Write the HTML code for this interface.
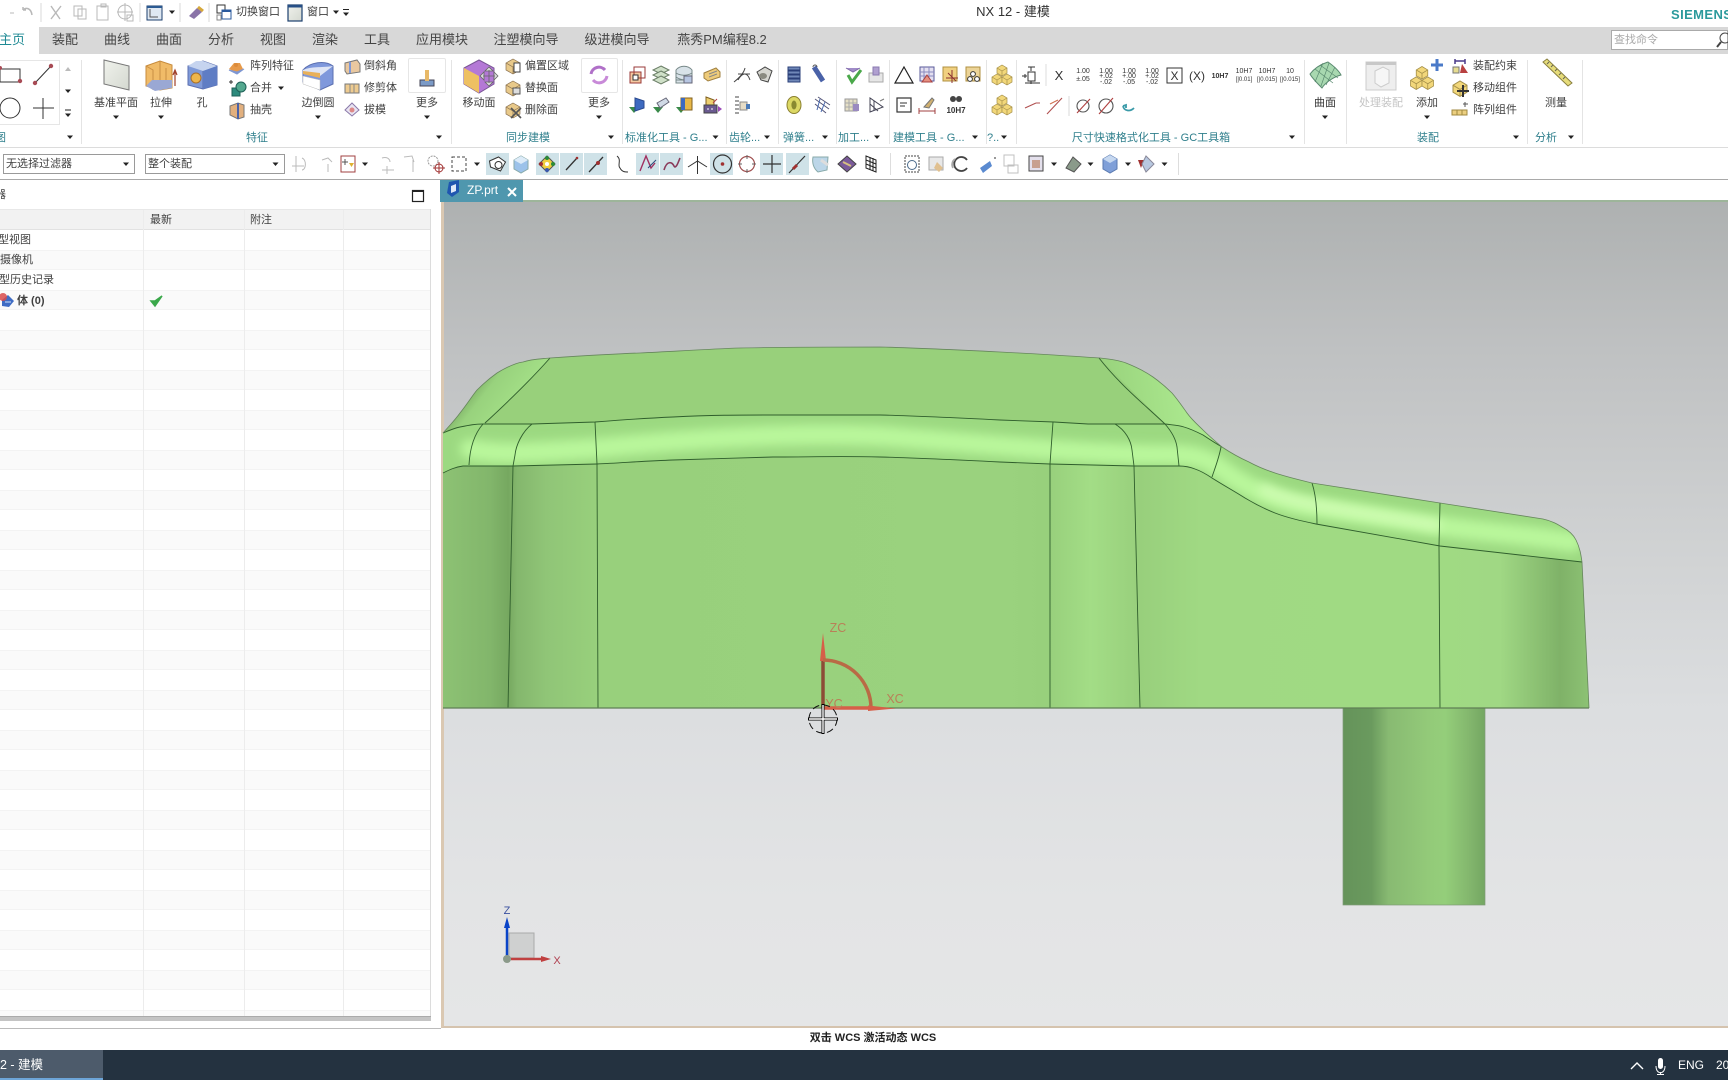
<!DOCTYPE html>
<html lang="zh"><head><meta charset="utf-8"><title>NX 12 - 建模</title>
<style>
html,body{margin:0;padding:0;width:1728px;height:1080px;overflow:hidden;background:#fff}
body{position:relative;font-family:"Liberation Sans","Noto Sans CJK SC",sans-serif;color:#333}
#w{position:absolute;left:0;top:0;width:1728px;height:1080px;overflow:hidden;filter:blur(.35px)}
.b{position:absolute}
.t{position:absolute;white-space:nowrap;font-size:11px;line-height:14px;color:#3f3f3f}
.c{transform:translateX(-50%)}
.m{font-size:13px;line-height:16px;top:32px;color:#444}
.g{top:131px;color:#2f7f8c}
.l{top:96px}
.r1{top:59px}.r2{top:81px}.r3{top:103px}
.s{position:absolute;width:1px;top:60px;height:84px;background:#e4e4e4}
.h{position:absolute;top:153px;height:22px;width:23px;background:#cfe2e8}
.cl{position:absolute;top:210px;height:806px;width:1px;background:#ececec}
.row{position:absolute;left:0;width:430px;height:20px;background:#fafafa;border-top:1px solid #f3f3f3;border-bottom:1px solid #f3f3f3;box-sizing:border-box}
svg{position:absolute;left:0;top:0}
</style></head><body><div id="w">

<!-- chrome backgrounds -->
<div class="b" style="left:0;top:27px;width:1728px;height:27px;background:#d8d8d8"></div>
<div class="b" style="left:0;top:27px;width:39px;height:27px;background:#fff"></div>
<div class="b" style="left:0;top:147px;width:1728px;height:1px;background:#dcdcdc"></div>
<div class="b" style="left:0;top:179px;width:1728px;height:1px;background:#a9a9a9"></div>
<div class="s" style="left:81px"></div><div class="s" style="left:451px"></div><div class="s" style="left:622px"></div>
<div class="s" style="left:726px"></div><div class="s" style="left:778px"></div><div class="s" style="left:836px"></div>
<div class="s" style="left:889px"></div><div class="s" style="left:986px"></div><div class="s" style="left:1016px"></div>
<div class="s" style="left:1304px"></div><div class="s" style="left:1346px"></div><div class="s" style="left:1527px"></div><div class="s" style="left:1582px"></div>
<div class="b" style="left:0;top:60px;width:60px;height:65px;border-right:1px solid #e6e6e6;border-top:1px solid #e6e6e6;border-bottom:1px solid #e6e6e6;box-sizing:border-box"></div>
<div class="b" style="left:408px;top:58px;width:38px;height:35px;border:1px solid #e6e6e6;border-radius:2px;box-sizing:border-box"></div>
<div class="b" style="left:581px;top:58px;width:37px;height:35px;border:1px solid #e6e6e6;border-radius:2px;box-sizing:border-box"></div>
<div class="b" style="left:1611px;top:30px;width:117px;height:20px;border:1px solid #aaa;background:#fff;box-sizing:border-box"></div>
<div class="b" style="left:3px;top:154px;width:132px;height:20px;border:1px solid #9a9a9a;box-sizing:border-box"></div>
<div class="b" style="left:145px;top:154px;width:140px;height:20px;border:1px solid #9a9a9a;box-sizing:border-box"></div>
<div class="h" style="left:486px"></div><div class="h" style="left:536px"></div><div class="h" style="left:560px"></div><div class="h" style="left:584px"></div>
<div class="h" style="left:636px"></div><div class="h" style="left:660px"></div><div class="h" style="left:710px"></div><div class="h" style="left:760px"></div><div class="h" style="left:786px"></div>
<div class="b" style="left:890px;top:153px;width:1px;height:22px;background:#ddd"></div>
<div class="b" style="left:1178px;top:153px;width:1px;height:22px;background:#ddd"></div>

<!-- left table -->
<div class="b" style="left:0;top:209px;width:431px;height:21px;background:#f2f2f2;border-top:1px solid #e8e8e8;border-bottom:1px solid #e2e2e2;box-sizing:border-box"></div>
<div class="row" style="top:250px"></div><div class="row" style="top:290px"></div><div class="row" style="top:330px"></div><div class="row" style="top:370px"></div><div class="row" style="top:410px"></div><div class="row" style="top:450px"></div><div class="row" style="top:490px"></div><div class="row" style="top:530px"></div><div class="row" style="top:570px"></div><div class="row" style="top:610px"></div><div class="row" style="top:650px"></div><div class="row" style="top:690px"></div><div class="row" style="top:730px"></div><div class="row" style="top:770px"></div><div class="row" style="top:810px"></div><div class="row" style="top:850px"></div><div class="row" style="top:890px"></div><div class="row" style="top:930px"></div><div class="row" style="top:970px"></div>
<div class="row" style="top:1010px;height:6px;border-bottom:0"></div>
<div class="cl" style="left:143px"></div><div class="cl" style="left:244px"></div><div class="cl" style="left:343px"></div>
<div class="b" style="left:430px;top:209px;width:1px;height:812px;background:#dcdcdc"></div>
<div class="b" style="left:0;top:1016px;width:431px;height:5px;background:#c4c4c4;border-top:1px solid #aaa;box-sizing:border-box"></div>
<div class="b" style="left:0;top:1028px;width:441px;height:1px;background:#bbb"></div>

<!-- viewport -->
<div class="b" style="left:440px;top:180px;width:83px;height:22px;background:#4f97ae"></div>
<div class="b" style="left:523px;top:200px;width:1205px;height:2px;background:#9db59a"></div>
<div class="b" style="left:441px;top:202px;width:1287px;height:826px;box-sizing:border-box;border-left:3px solid #dac8b2;border-bottom:2px solid #d5c3ae;background:linear-gradient(180deg,#aeb1b1 0,#bfc1c2 18%,#d0d2d3 42%,#dcdee0 62%,#e3e4e5 85%,#e5e6e7 100%)"></div>

<!-- taskbar -->
<div class="b" style="left:0;top:1050px;width:1728px;height:30px;background:#243240"></div>
<div class="b" style="left:0;top:1050px;width:103px;height:30px;background:#4d5b6b;border-bottom:2px solid #6da5d8;box-sizing:border-box"></div>

<svg width="1728" height="1080" viewBox="0 0 1728 1080" xmlns="http://www.w3.org/2000/svg">
<defs>
<linearGradient id="side" gradientUnits="userSpaceOnUse" x1="443" y1="0" x2="1589" y2="0">
<stop offset="0" stop-color="#8dc274"/><stop offset=".041" stop-color="#82b66b"/><stop offset=".057" stop-color="#76a860"/><stop offset=".065" stop-color="#84b76d"/><stop offset=".09" stop-color="#90c577"/><stop offset=".135" stop-color="#98d07c"/><stop offset=".486" stop-color="#9ad27e"/><stop offset=".53" stop-color="#98d07c"/><stop offset=".565" stop-color="#a3dd86"/><stop offset=".608" stop-color="#98cf7c"/><stop offset=".661" stop-color="#a0d983"/><stop offset=".87" stop-color="#a0da83"/><stop offset=".922" stop-color="#a0d884"/><stop offset=".975" stop-color="#7fb268"/><stop offset="1" stop-color="#8dc274"/>
</linearGradient>
<linearGradient id="cyl" gradientUnits="userSpaceOnUse" x1="1343" y1="0" x2="1485" y2="0">
<stop offset="0" stop-color="#65935a"/><stop offset=".2" stop-color="#6a9a5e"/><stop offset=".32" stop-color="#88ba72"/><stop offset=".6" stop-color="#93ca79"/><stop offset=".72" stop-color="#94ce7a"/><stop offset=".88" stop-color="#84b86e"/><stop offset="1" stop-color="#74a662"/>
</linearGradient>
<linearGradient id="cnl" gradientUnits="userSpaceOnUse" x1="462" y1="392" x2="505" y2="425">
<stop offset="0" stop-color="#74a35f"/><stop offset=".35" stop-color="#98d27d"/><stop offset="1" stop-color="#a5e188"/>
</linearGradient>
<linearGradient id="cnr" gradientUnits="userSpaceOnUse" x1="1100" y1="380" x2="1180" y2="370">
<stop offset="0" stop-color="#98d27c"/><stop offset="1" stop-color="#aae78d"/>
</linearGradient>
<linearGradient id="pl" x1="0" y1="0" x2="1" y2="1"><stop offset="0" stop-color="#f0f2ec"/><stop offset="1" stop-color="#d4d8d0"/></linearGradient>
<filter id="bl" x="-5%" y="-30%" width="110%" height="160%"><feGaussianBlur stdDeviation="5"/></filter>
<clipPath id="bandc"><path d="M443,433C450,430 455,428 460,427C470,425 475,424 483,424L532,424L595,422C620,420 650,418 673,417C710,415 740,415 773,415C810,415 850,415 880,415C920,416 960,418 1000,420L1054,422L1088,424L1165,424C1173,425 1178,425 1184,427C1191,429 1197,432 1203,435C1209,439 1215,443 1222,447C1231,453 1240,458 1249,462C1258,467 1266,470 1275,473C1287,477 1300,480 1312,483L1440,503L1543,519C1552,521 1557,524 1562,527C1570,531 1574,536 1576,540C1580,548 1581,555 1582,562L1440,546L1316,524C1302,521 1288,518 1275,513C1265,509 1255,504 1245,498C1234,491 1223,485 1212,478C1206,474 1201,471 1195,469C1190,467 1185,466 1179,466L1134,466L1050,464L1000,462C960,460 920,458 880,457C840,456 810,457 773,457C740,458 705,459 673,460C645,461 620,463 597,464L513,466L463,466C455,467 449,470 443,473Z"/></clipPath>
<path id="d" d="M-3,-1.5h6l-3,3.5z" fill="#222"/>
<g id="cb"><path d="M-5,-2 0,-5 5,-2 5,3 0,6 -5,3z" fill="#f2d77a" stroke="#a5904a" stroke-width=".7"/><path d="M-5,-2 0,1 5,-2M0,1V6" fill="none" stroke="#a5904a" stroke-width=".7"/></g>
<g id="cubes"><use href="#cb" x="0" y="-5"/><use href="#cb" x="-5" y="4"/><use href="#cb" x="5" y="4"/></g>
<g id="fc"><path d="M-7,-3 0,-7 7,-3V4L0,8-7,4z" fill="#e8c98a" stroke="#8a7150" stroke-width=".7"/><path d="M-7,-3 0,1 7,-3M0,1V8" fill="none" stroke="#8a7150" stroke-width=".7"/></g>
</defs>

<!-- ===== MODEL ===== -->
<rect x="1343" y="708" width="142" height="197" fill="url(#cyl)" stroke="#7f9a78" stroke-width=".7"/>
<path id="sil" d="M443,708L443,433C450,425 455,420 460,413C468,403 472,396 477,390C485,382 490,378 497,373C507,367 515,363 523,362C532,359 540,359 550,358C580,356 610,354 640,353C680,351 710,349 740,348C790,347 830,347 880,347C920,348 960,350 1000,352C1040,354 1070,356 1100,358C1110,359 1118,360 1126,363C1136,367 1146,372 1153,377C1160,382 1167,388 1172,393C1178,400 1182,406 1187,413C1192,420 1198,425 1203,430C1209,436 1215,441 1222,447C1231,453 1240,458 1249,462C1258,467 1266,470 1275,473C1287,477 1300,480 1312,483L1440,503L1543,519C1552,521 1557,524 1562,527C1570,531 1574,536 1576,540C1580,548 1581,555 1582,562L1589,708Z" fill="url(#side)"/>
<!-- top face -->
<path d="M483,424C510,400 535,375 550,358C580,356 610,354 640,353C680,351 710,349 740,348C790,347 830,347 880,347C920,348 960,350 1000,352C1040,354 1070,356 1100,358L1165,424L1088,424L1054,422L1000,420C960,418 920,416 880,415C850,415 810,415 773,415C740,415 710,415 673,417C650,418 620,420 595,422L532,424Z" fill="#98d07b"/>
<!-- corners -->
<path d="M443,433C450,425 455,420 460,413C468,403 472,396 477,390C485,382 490,378 497,373C507,367 515,363 523,362C532,359 540,359 550,358C535,375 510,400 483,424C470,424 455,428 443,433Z" fill="url(#cnl)"/>
<path d="M1100,358C1110,359 1118,360 1126,363C1136,367 1146,372 1153,377C1160,382 1167,388 1172,393C1178,400 1182,406 1187,413C1192,420 1198,425 1203,430C1209,436 1215,441 1222,447C1212,440 1195,429 1184,427C1178,425 1173,425 1165,424Z" fill="url(#cnr)"/>
<!-- fillet band -->
<g clip-path="url(#bandc)">
<rect x="440" y="410" width="1150" height="160" fill="#9cd981"/>
<path filter="url(#bl)" fill="none" stroke="#b9f79b" stroke-width="20" stroke-linecap="round" d="M470,449C500,456 540,452 600,448C700,438 800,432 880,436C960,442 1060,452 1134,454C1175,456 1195,450 1220,468C1250,492 1290,505 1320,508L1440,526C1490,533 1530,535 1572,542"/>
<path filter="url(#bl)" fill="none" stroke="#d0fdb4" stroke-width="10" d="M1260,488C1290,503 1320,506 1440,526"/>
</g>
<!-- face edges -->
<g fill="none" stroke="#2f5e2c" stroke-width=".9">
<path d="M443,433C450,430 455,428 460,427C470,425 475,424 483,424L532,424L595,422C620,420 650,418 673,417C710,415 740,415 773,415C810,415 850,415 880,415C920,416 960,418 1000,420L1054,422L1088,424L1165,424C1173,425 1178,425 1184,427C1191,429 1197,432 1203,435C1209,439 1215,443 1222,447" />
<path d="M443,473C449,470 455,467 463,466L513,466L597,464C620,463 645,461 673,460C705,459 740,458 773,457C810,457 840,456 880,457C920,458 960,460 1000,462L1050,464L1134,466L1179,466C1185,466 1190,467 1195,469C1201,471 1206,474 1212,478C1223,485 1234,491 1245,498C1255,504 1265,509 1275,513C1288,518 1302,521 1316,524L1440,546L1582,562" />
<path d="M550,358C535,375 510,400 485,423"/>
<path d="M483,424C476,432 470,445 469,465"/>
<path d="M532,424C522,432 516,445 515,455L513,466L508,708"/>
<path d="M595,422L597,464L598,708"/>
<path d="M1053,422L1050,464V708"/>
<path d="M1115,424C1125,430 1131,440 1132,450L1134,466L1140,708"/>
<path d="M1165,424C1172,432 1176,440 1177,447L1179,466"/>
<path d="M1099,358C1120,385 1145,405 1165,424"/>
<path d="M1221,447C1219,458 1215,468 1212,477"/>
<path d="M1312,483C1316,495 1317,510 1317,524"/>
<path d="M1440,503L1439,546L1440,708"/>
</g>
<path d="M443,433C450,425 455,420 460,413C468,403 472,396 477,390C485,382 490,378 497,373C507,367 515,363 523,362C532,359 540,359 550,358C580,356 610,354 640,353C680,351 710,349 740,348C790,347 830,347 880,347C920,348 960,350 1000,352C1040,354 1070,356 1100,358C1110,359 1118,360 1126,363C1136,367 1146,372 1153,377C1160,382 1167,388 1172,393C1178,400 1182,406 1187,413C1192,420 1198,425 1203,430C1209,436 1215,441 1222,447C1231,453 1240,458 1249,462C1258,467 1266,470 1275,473C1287,477 1300,480 1312,483L1440,503L1543,519C1552,521 1557,524 1562,527C1570,531 1574,536 1576,540C1580,548 1581,555 1582,562L1589,708" fill="none" stroke="#66865c" stroke-width=".8"/>
<path d="M443,708H1589" stroke="#5f7f55" stroke-width="1.2"/>

<!-- WCS -->
<path d="M823,660V708" stroke="#8c4c36" stroke-width="3.5"/>
<path d="M823,633L820,661H826Z" fill="#d65f48"/>
<path d="M823,660A48,48 0 0 1 871,708" fill="none" stroke="#b96a45" stroke-width="3.5"/>
<path d="M823,708H870" stroke="#d65f48" stroke-width="3.5"/>
<path d="M868,705.5L896,708.5 868,711Z" fill="#d65f48"/>
<text x="838" y="632" text-anchor="middle" font-size="12.5" fill="#b98058" font-family="Liberation Sans">ZC</text>
<text x="895" y="703" text-anchor="middle" font-size="12.5" fill="#b98058" font-family="Liberation Sans">XC</text>
<text x="834" y="708" text-anchor="middle" font-size="12.5" fill="#b98058" font-family="Liberation Sans">YC</text>
<circle cx="823" cy="719" r="14" fill="none" stroke="#111" stroke-width="1" stroke-dasharray="7 4"/>
<path d="M823,704V734M808,719H838" stroke="#000" stroke-width="3"/><path d="M823,705V733M809,719H837" stroke="#fff" stroke-width="1.4"/>

<!-- triad -->
<rect x="509" y="933" width="25" height="25" fill="#cfd0d0" stroke="#aaa"/>
<path d="M507,959V925" stroke="#0a44c8" stroke-width="2.5"/><path d="M504,928 507,917 510,928Z" fill="#0a44c8"/>
<path d="M511,959H545" stroke="#c04040" stroke-width="2.5"/><path d="M541,956 551,959 541,962Z" fill="#c04040"/>
<circle cx="507" cy="959" r="4" fill="#8b9a8a"/>
<text x="507" y="914" text-anchor="middle" font-size="11" fill="#3a50a0" font-family="Liberation Sans">Z</text>
<text x="557" y="964" text-anchor="middle" font-size="11" fill="#b04050" font-family="Liberation Sans">X</text>

<!-- ===== QUICK ACCESS ===== -->
<g fill="none" stroke="#b8b8b8" stroke-width="1">
<path d="M10,13h4"/><path d="M23,10C26,7 31,8 32,15M23,10v-3M23,10h3" stroke-width="1.5"/>
<path d="M41,3V22M140,3V22M180,3V22M209,3V22" stroke="#d8d8d8"/>
<path d="M51,19 61,6M60,19 51,6" stroke-width="1.4"/>
<rect x="74" y="6" width="8" height="10"/><rect x="78" y="9" width="8" height="10"/>
<rect x="97" y="6" width="11" height="14"/><rect x="101" y="4" width="5" height="3"/>
<circle cx="125" cy="12" r="7"/><path d="M125,3V21M117,12H133"/><rect x="127" y="15" width="6" height="6"/>
</g>
<rect x="147" y="6" width="15" height="14" fill="#dfe8f2" stroke="#1c3f6e"/><path d="M150,9V17H158" stroke="#555" fill="none"/><rect x="147" y="6" width="15" height="2" fill="#2b5a92"/>
<use href="#d" x="172" y="12"/>
<path d="M189,16 197,8 202,12 194,19Z" fill="#8a74a8"/><path d="M198,7 203,11" stroke="#d6a83a" stroke-width="3"/>
<rect x="217" y="5" width="8" height="8" fill="none" stroke="#333"/><rect x="222" y="10" width="9" height="9" fill="#fff" stroke="#2a5a9e"/><rect x="222" y="10" width="9" height="2" fill="#2a5a9e"/><rect x="217" y="15" width="4" height="5" fill="none" stroke="#888"/>
<rect x="288" y="5" width="14" height="16" fill="url(#pl)" stroke="#1c3f6e" stroke-width="1.2"/><rect x="288" y="5" width="14" height="2.5" fill="#274f86"/>
<use href="#d" x="336" y="12"/><use href="#d" x="346" y="14"/><path d="M343,9.5h6" stroke="#222"/>

<!-- ===== RIBBON left ===== -->
<rect x="0" y="69" width="20" height="13" fill="none" stroke="#333" stroke-width="1"/><circle cx="0" cy="68" r="2" fill="#a84b55"/><circle cx="20" cy="81" r="2.2" fill="#a84b55"/>
<path d="M35,83 51,66" stroke="#333"/><circle cx="35" cy="83" r="2.2" fill="#a84b55"/><circle cx="51" cy="66" r="2.2" fill="#a84b55"/>
<circle cx="10" cy="108" r="10" fill="none" stroke="#333"/><path d="M43,98V119M33,108H54" stroke="#333"/>
<path d="M65,71h6l-3,-4z" fill="#bbb"/><use href="#d" x="68" y="91"/><use href="#d" x="68" y="115"/><path d="M65,110h6" stroke="#222"/>
<use href="#d" x="70" y="137"/>

<path d="M104,60 129,66V90L104,84Z" fill="url(#pl)" stroke="#777"/><use href="#d" x="116" y="117"/>
<path d="M146,66 160,61 172,65V88L160,90 146,86Z" fill="#f0bb68" stroke="#c78b3c"/><path d="M146,66 153,70V90M160,61V86M166,68V86" fill="none" stroke="#c98f45"/><path d="M146,86 152,80H172V88L155,91Z" fill="#9aa8d4"/><path d="M175,86V72M173,75 175,70 177,75" fill="none" stroke="#a0402a" stroke-width="1.2"/><use href="#d" x="161" y="117"/>
<path d="M188,66 203,61 217,66V85L203,89 188,85Z" fill="#7f9ad8" stroke="#5b6fb0"/><path d="M188,66 196,61 203,61 217,66 203,71Z" fill="#c6d4ef"/><path d="M203,71V89" stroke="#5b6fb0"/><path d="M203,71 217,66V85L203,89Z" fill="#5f7dc4"/><circle cx="196" cy="78" r="5" fill="#eeb64c" stroke="#a8702a"/>
<path d="M229,69 234,63 240,63 243,69 237,73Z" fill="#e79a4a"/><path d="M229,70 237,74 244,69 237,72Z" fill="#7f97d2" stroke="#7f97d2"/><circle cx="236" cy="65" r="2" fill="#dc8b3a"/>
<rect x="232" y="88" width="8" height="8" fill="#2c8a7c" stroke="#1e6057"/><circle cx="241" cy="87" r="5" fill="#54a88f" stroke="#1e6057"/><path d="M229,82h4M231,80v4" stroke="#333"/>
<path d="M230,106 238,103 244,105V117L238,119 230,115Z" fill="#e2b07e" stroke="#777"/><path d="M238,103V119" stroke="#4a62a8" stroke-width="2"/>
<use href="#d" x="281" y="88"/>
<path d="M303,70C310,62 325,60 333,66V84L320,90 303,82Z" fill="#7f98dc" stroke="#5b6fb0"/><path d="M303,70C312,66 320,68 333,66L320,76 303,74Z" fill="#dfe5f5"/><path d="M303,76 320,80V90L303,84Z" fill="#fff" stroke="#bbb" stroke-width=".5"/><path d="M303,74 320,78 320,73 303,71Z" fill="#e8b05a"/><use href="#d" x="318" y="117"/>
<g transform="translate(352,66)"><path d="M-7,-3 5,-6 8,-2V6L-5,8-7,5Z" fill="#e9c8a0" stroke="#777"/><path d="M-2,-4V7" stroke="#7f98d6" stroke-width="2"/></g>
<g transform="translate(352,88)"><rect x="-7" y="-4" width="14" height="9" fill="#eecb90" stroke="#777"/><path d="M-2,-4V5M2,-4V5" stroke="#888"/></g>
<g transform="translate(352,110)"><path d="M0,-7 7,0 0,6-7,0Z" fill="#e8e4f2" stroke="#8a78a8"/><circle r="2.5" fill="#d88" /></g>
<g transform="translate(427,78)"><rect x="-7" y="2" width="14" height="6" fill="#7b9ac6" stroke="#445"/><rect x="-2" y="-8" width="4" height="11" fill="#e8b968"/></g><use href="#d" x="427" y="117"/>
<use href="#d" x="439" y="137"/>

<g transform="translate(479,76)"><path d="M-15,-8 0,-16 15,-8V8L0,17-15,8Z" fill="#b478d6" stroke="#7a5596"/><path d="M-15,-8 0,0V17L-15,8Z" fill="#eec062"/><path d="M4,0H16M10,-6V7M10,-9 6,-5H14ZM10,10 6,6H14ZM1,0 5,-4V4ZM19,0 15,-4V4Z" fill="#d9d9dc" stroke="#666" stroke-width=".8"/></g>
<g transform="translate(513,66)"><use href="#fc"/><rect x="1" y="-3" width="6" height="9" fill="#fff" stroke="#444"/></g>
<g transform="translate(513,88)"><use href="#fc"/><rect x="0" y="0" width="7" height="6" fill="#ddd" stroke="#555"/></g>
<g transform="translate(513,110)"><use href="#fc"/><path d="M-2,-2 8,8M8,-2 -2,8" stroke="#555" stroke-width="1.6"/></g>
<g transform="translate(599,75)" fill="none" stroke-width="3"><path d="M-8,-1A8,8 0 0 1 6,-5" stroke="#b070c8"/><path d="M8,1A8,8 0 0 1 -6,5" stroke="#c88ad8"/></g><use href="#d" x="599" y="117"/>
<use href="#d" x="611" y="137"/>

<!-- GC tool rows -->
<g transform="translate(637,75)"><rect x="-7" y="-3" width="11" height="11" fill="#f4c9a2" stroke="#9a3a38"/><rect x="-3" y="-8" width="11" height="11" fill="none" stroke="#9a3a38"/><rect x="-4" y="0" width="5" height="5" fill="#fff" stroke="#333"/></g>
<g transform="translate(661,75)" fill="#cfe0c8" stroke="#6a7d66"><path d="M0,-9 8,-5 0,-1-8,-5Z"/><path d="M0,-4 8,0 0,4-8,0Z"/><path d="M0,1 8,5 0,9-8,5Z"/></g>
<g transform="translate(684,75)"><path d="M-8,-5C-4,-10 4,-10 8,-5V8H-8Z" fill="#d8e2e8" stroke="#788"/><path d="M-8,-2C-3,1 3,1 8,-2M-8,2C-4,5 0,5 2,5M-8,5H2" fill="none" stroke="#788"/><rect x="0" y="1" width="8" height="7" fill="#b7c6e2" stroke="#667"/></g>
<g transform="translate(712,75)"><path d="M-8,-2 4,-7 8,-3 8,2-4,6-8,3Z" fill="#eecb7a" stroke="#a08040"/><path d="M-3,-1 5,-4M-3,2 5,-1" stroke="#888"/></g>
<g transform="translate(637,105)"><path d="M-8,2-3,8 2,2" fill="#3a8a4a"/><path d="M-2,-7 7,-4V3L-2,6Z" fill="#3d6ac0" stroke="#2a4a90"/></g>
<g transform="translate(661,105)"><path d="M-8,2-3,8 2,2" fill="#3a8a4a"/><path d="M-4,-2 5,-7 8,-3-1,3Z" fill="#d0dae6" stroke="#667"/></g>
<g transform="translate(684,105)"><path d="M-8,2-3,8 2,2" fill="#3a8a4a"/><rect x="-3" y="-7" width="11" height="12" fill="#e8b848" stroke="#806020"/><rect x="-3" y="-7" width="4" height="12" fill="#3d6ac0"/></g>
<g transform="translate(712,105)"><path d="M-6,-8 2,-5V3H-6Z" fill="#eed070" stroke="#806020"/><rect x="-8" y="0" width="13" height="8" fill="#6a5a90" stroke="#444"/><path d="M-5,4h2M-1,4h2" stroke="#fff"/><path d="M6,1 10,4 6,7Z" fill="#9a48b8"/><path d="M5,-6 1,-2" stroke="#b04040"/></g>
<g transform="translate(742,75)" fill="none" stroke="#444"><path d="M-8,7C-3,3 2,-2 3,-7M-4,-1H8M-4,5C0,-2 5,-4 8,5"/></g>
<g transform="translate(765,75)"><path d="M-8,-3 0,-8 7,-4 3,7-4,5Z" fill="#d6d6d0" stroke="#444"/><ellipse cx="-2" cy="1" rx="4" ry="3" fill="#8a8a80"/></g>
<g transform="translate(742,105)"><path d="M-7,-8h4M-7,-4h4M-7,0h4M-7,4h4M-7,8h4" stroke="#444"/><path d="M-2,-3H5V5H-2Z" fill="#e6dcc6" stroke="#888"/><rect x="4" y="-1" width="4" height="5" fill="#4a7ab8"/></g>
<g transform="translate(794,75)" fill="#7088b8" stroke="#2a3f78"><rect x="-6" y="-8" width="12" height="3"/><rect x="-6" y="-4" width="12" height="3"/><rect x="-6" y="0" width="12" height="3"/><rect x="-6" y="4" width="12" height="3"/></g>
<g transform="translate(818,75)"><path d="M-4,-8 5,6" stroke="#4a62a8" stroke-width="5"/><path d="M-5,-8a2,2 0 0 1 4,0" fill="none" stroke="#555"/></g>
<g transform="translate(794,105)"><ellipse rx="7" ry="8.5" fill="#dcd864" stroke="#8a8030"/><ellipse rx="2.6" ry="4.5" fill="#8a8a30"/></g>
<g transform="translate(822,105)" fill="none" stroke="#557"><path d="M-7,-6 7,4M-4,-8 8,0M-7,-1 4,8"/><path d="M-2,-6-5,5M3,-3-1,7" stroke="#4a6ab0"/></g>
<g transform="translate(853,75)"><path d="M-7,-7 0,-3 7,-7" fill="#a08cc8" stroke="#806aa8"/><path d="M-5,0-1,7 8,-5" fill="none" stroke="#4aa84a" stroke-width="3"/></g>
<g transform="translate(876,75)"><rect x="-7" y="-2" width="14" height="9" fill="#e6e6e6" stroke="#aaa"/><rect x="-3" y="-8" width="6" height="8" fill="#b0a0d0" stroke="#8a7ab0"/></g>
<g transform="translate(852,105)"><rect x="-7" y="-6" width="12" height="12" fill="#e6e0c6" stroke="#999"/><path d="M-7,-2h12M-7,2h12M-3,-6v12M1,-6v12" stroke="#aaa"/><rect x="1" y="-1" width="6" height="7" fill="#9a8ac0"/></g>
<g transform="translate(876,105)" fill="none" stroke="#445"><path d="M-6,-7V7L7,2ZM-6,-1 2,6M-2,-4V5"/><path d="M4,-4 8,-6" stroke="#777"/></g>
<g transform="translate(904,75)"><path d="M0,-8 9,8H-9Z" fill="none" stroke="#222" stroke-width="1.2"/></g>
<g transform="translate(927,75)"><rect x="-7" y="-8" width="14" height="14" fill="#e4e0f0" stroke="#5a5a9a"/><path d="M-7,-3H7M-7,1H7M-3,-8V6M2,-8V6" stroke="#8a8ac0"/><path d="M0,0 5,7H-5Z" fill="#e69080" stroke="#a84040"/></g>
<g transform="translate(950,75)"><rect x="-7" y="-8" width="14" height="14" fill="#f0d080" stroke="#b09040"/><path d="M2,-5V8M-4,3H8M-2,-2 6,6" stroke="#8a3030"/></g>
<g transform="translate(973,75)"><rect x="-7" y="-8" width="14" height="14" fill="#ecd498" stroke="#b09040"/><circle cx="0" cy="-1" r="2.4" fill="#fff" stroke="#333"/><circle cx="-3" cy="4" r="2.4" fill="#fff" stroke="#333"/><circle cx="4" cy="4" r="2.4" fill="#fff" stroke="#333"/></g>
<g transform="translate(904,105)"><rect x="-7" y="-7" width="14" height="14" fill="#fff" stroke="#333" stroke-width="1.2"/><path d="M-4,-2H3M-4,1H1" stroke="#333"/></g>
<g transform="translate(927,105)"><path d="M-8,3V9M8,3V9M-8,6H8" stroke="#a04040"/><path d="M-3,2 5,-7 7,-5 2,3Z" fill="#d0b070" stroke="#777"/></g>
<g transform="translate(956,100)"><circle cx="-3" cy="-1" r="3" fill="#444"/><circle cx="3" cy="-1" r="3" fill="#444"/></g><text x="956" y="113" text-anchor="middle" font-size="8" font-weight="bold" fill="#333" font-family="Liberation Sans">10H7</text>
<use href="#cubes" x="1002" y="75"/><use href="#cubes" x="1002" y="105"/>
<use href="#d" x="1004" y="137"/>

<g transform="translate(1031,75)" fill="none" stroke="#333"><rect x="-3" y="-3" width="7" height="9"/><path d="M-9,1H-4M-6,-1V3M-6,8H9M0,-8V-4M-3,-8H4M0,6V9"/></g>
<path d="M1046,64V86" stroke="#ddd"/>
<text x="1059" y="80" text-anchor="middle" font-size="13" fill="#333" font-family="Liberation Sans">X</text>
<g font-family="Liberation Sans" font-size="7" fill="#333" text-anchor="middle">
<text x="1083" y="73">1.00</text><text x="1083" y="81">±.05</text>
<text x="1106" y="73">1.00</text><text x="1106" y="78">+.02</text><text x="1106" y="84">-.02</text>
<text x="1129" y="73">1.00</text><text x="1129" y="78">+.00</text><text x="1129" y="84">-.05</text>
<text x="1152" y="73">1.00</text><text x="1152" y="78">+.02</text><text x="1152" y="84">-.02</text>
<text x="1220" y="78" font-weight="bold">10H7</text>
<text x="1244" y="73">10H7</text><text x="1244" y="81" font-size="6">[|0.01]</text>
<text x="1267" y="73">10H7</text><text x="1267" y="81" font-size="6">[|0.015]</text>
<text x="1290" y="73">10</text><text x="1290" y="81" font-size="6">[|0.015]</text>
</g>
<rect x="1167" y="68" width="15" height="15" fill="none" stroke="#333"/><text x="1174.5" y="80" text-anchor="middle" font-size="12" fill="#333" font-family="Liberation Sans">X</text>
<text x="1197" y="80" text-anchor="middle" font-size="12" fill="#333" font-family="Liberation Sans">(X)</text>
<g fill="none" stroke-width="1.1">
<path d="M1025,108 1036,103 M1036,103H1040" stroke="#b05050"/>
<path d="M1047,114 1062,98" stroke="#b05050"/><path d="M1050,104 1058,100" stroke="#d07050"/>
<path d="M1069,96V116" stroke="#ddd"/>
<circle cx="1083" cy="106" r="6" stroke="#555"/><path d="M1077,113 1090,99" stroke="#b04040"/>
<circle cx="1106" cy="106" r="7" stroke="#555"/><path d="M1099,114 1113,98" stroke="#b04040"/>
</g>
<path d="M1123,106C1124,111 1130,112 1134,108M1123,106l3,-1v3" fill="none" stroke="#3a9aa8" stroke-width="1.8"/>
<use href="#d" x="1292" y="137"/>
<!-- surface -->
<g transform="translate(1325,75)"><path d="M-15,-1C-8,-10 0,-12 3,-13 10,-8 14,-4 16,0 8,2 0,8-3,13-8,8-13,3-15,-1Z" fill="#a8d8b0" stroke="#5a8a70"/><path d="M-10,-6 8,8M-5,-10 13,3M-2,-12-10,7M4,-12-4,11M10,-8 1,10" stroke="#5a8a70" fill="none" stroke-width=".7"/></g><use href="#d" x="1325" y="117"/>
<!-- assembly -->
<g transform="translate(1381,75)"><rect x="-15" y="-13" width="30" height="28" fill="#eee" stroke="#ccc"/><rect x="-15" y="-13" width="30" height="3" fill="#c8c8c8"/><path d="M-6,-4 2,-8 8,-5 8,8 0,12-6,8Z" fill="#f6f6f6" stroke="#ccc"/></g>
<use href="#cubes" transform="translate(1422,78) scale(1.15)"/><path d="M1437,59V71M1431,65H1443" stroke="#4a7ac8" stroke-width="3"/><use href="#d" x="1427" y="117"/>
<g transform="translate(1460,66)"><path d="M-5,-7V-2M5,-7V-2M-5,-5H5" stroke="#4a3a8a" stroke-width="1.5"/><rect x="-7" y="1" width="6" height="6" fill="#e6dc90" stroke="#777"/><path d="M0,7 8,7 2,-2Z" fill="#b84040"/></g>
<g transform="translate(1460,88)"><use href="#cb" transform="scale(1.4)"/><path d="M3,-3V9M-3,3H9" stroke="#333" stroke-width="2"/></g>
<g transform="translate(1460,110)"><path d="M-8,0h5v5h-5zM-3,0h5v5h-5zM2,0h5v5h-5z" fill="#eccf80" stroke="#a08a40"/><path d="M5,-8V-3M3,-6H8" stroke="#555"/></g>
<use href="#d" x="1516" y="137"/>
<g transform="translate(1556,75)"><path d="M-13,-13-9,-16 16,8 12,11Z" fill="#e6dc7a" stroke="#8a8040"/><path d="M-9,-11-7,-13M-5,-8-3,-10M-1,-4 1,-6M3,0 5,-2M7,4 9,2" stroke="#665"/></g>
<use href="#d" x="1571" y="137"/>
<!-- search -->
<circle cx="1725" cy="38" r="5" fill="none" stroke="#444"/><path d="M1721,42 1717,47" stroke="#444" stroke-width="2"/>

<!-- group dropdowns -->
<use href="#d" x="715.5" y="137"/><use href="#d" x="767" y="137"/><use href="#d" x="825" y="137"/><use href="#d" x="877" y="137"/><use href="#d" x="975" y="137"/>

<!-- ===== SELECT BAR ===== -->
<use href="#d" x="126" y="164"/><use href="#d" x="275.5" y="164"/>
<g fill="none" stroke="#bbb">
<path d="M296,156V172M292,166H304M302,158C307,160 306,170 302,170"/>
<path d="M322,160 328,158 332,162M328,164V172" />
<path d="M382,158C388,156 390,160 390,162M387,166V174M382,170H394"/>
<path d="M404,157 412,156 414,162M413,160V172"/>
</g>
<rect x="341" y="156" width="14" height="16" fill="#fff" stroke="#a04040"/><path d="M345,159V165M342,162H348" stroke="#555"/><path d="M349,163h5l-2.5,4z" fill="#e0b030"/>
<use href="#d" x="365" y="164"/>
<circle cx="433" cy="161" r="5" fill="none" stroke="#999" stroke-dasharray="2 1"/><circle cx="439" cy="168" r="4" fill="none" stroke="#a03030"/><path d="M439,162V174M433,168H445" stroke="#a03030"/>
<rect x="452" y="157" width="14" height="14" fill="none" stroke="#444" stroke-dasharray="3 2"/>
<use href="#d" x="477" y="164"/>
<g transform="translate(497.5,164)"><path d="M-8,-3 1,-7 8,-2 3,7-7,3Z" fill="#fff" stroke="#333"/><circle cx="1" cy="1" r="3.5" fill="none" stroke="#333"/></g>
<g transform="translate(521,164)"><path d="M-7,-4 0,-8 7,-4V5L0,9-7,5Z" fill="#9cc2ea" stroke="#8aa"/><path d="M-7,-4 0,0 7,-4 0,-8Z" fill="#dcebf8"/></g>
<g transform="translate(547,164)"><path d="M0,-8 8,0 0,8-8,0Z" fill="#f0d040" stroke="#555"/><circle cy="-6" r="2" fill="#2a8a3a"/><circle cx="-6" r="2" fill="#a03030"/><circle cx="6" r="2" fill="#2a8a3a"/><circle cy="6" r="2" fill="#3a5ab0"/><circle r="2" fill="#fff"/></g>
<path d="M566,170 577,158" stroke="#333" stroke-width="1.3"/><circle cx="577" cy="158" r="1.3" fill="#a03030"/>
<path d="M589,172 603,157" stroke="#333" stroke-width="1.3"/><circle cx="598" cy="163" r="2" fill="#a03030"/>
<path d="M617,156C622,160 617,165 620,168 622,172 625,172 628,172" fill="none" stroke="#333"/>
<path d="M640,171 646,156 651,168 655,163" fill="none" stroke="#a03060" stroke-width="1.4"/><path d="M648,168 656,160" stroke="#2a4a7a"/>
<path d="M664,170C667,160 672,162 674,166 676,170 679,160 680,158" fill="none" stroke="#8a3a5a" stroke-width="1.6"/>
<path d="M697.5,156V174M688,167 697.5,161 707,167" fill="none" stroke="#333"/>
<circle cx="722.5" cy="164" r="9" fill="none" stroke="#333" stroke-width="1.2"/><circle cx="722.5" cy="164" r="1.8" fill="#a03030"/>
<circle cx="747" cy="164" r="7.5" fill="none" stroke="#a05050" stroke-width="1.2"/><path d="M747,155V159M747,169V173M738,164H742M752,164H756" stroke="#666"/>
<path d="M772,155V173M763,164H781" stroke="#333" stroke-width="1.2"/>
<path d="M789,173 805,156" stroke="#333" stroke-width="1.2"/><path d="M793,169 797,165" stroke="#a03030" stroke-width="3"/>
<path d="M813,157H828L827,170 818,172C813,168 812,162 813,157Z" fill="#bcd6e8" stroke="#8aa"/><path d="M821,160 828,165" stroke="#ddd" stroke-width="3"/>
<path d="M847,156 856,164 847,172 838,164Z" fill="#7a5a9a" stroke="#444"/><path d="M843,162 851,166" stroke="#d6c080" stroke-width="2"/>
<g fill="none" stroke="#222"><path d="M866,156 876,160V172L866,168Z"/><path d="M866,160 876,164M866,164 876,168M870,157V170M873,158V171"/></g>
<g fill="none">
<rect x="905" y="156" width="14" height="16" stroke="#444" stroke-dasharray="2 1"/><circle cx="912" cy="165" r="4.5" stroke="#4a6a8a"/>
<rect x="929" y="157" width="14" height="13" stroke="#aaa" fill="#e8e8e8"/><path d="M937,162 943,168 939,172 934,168Z" fill="#e0c090"/>
<path d="M967,160A7,7 0 1 0 967,168" stroke="#444" stroke-width="1.8"/><path d="M953,168A7,7 0 0 1 955,159" stroke="#a8a8a8" stroke-width="1.8"/>
</g>
<path d="M980,168 990,161 992,166 983,173Z" fill="#5a8ad0"/><circle cx="995" cy="158" r="1" fill="#777"/>
<g fill="none" stroke="#c0c0c0"><rect x="1004" y="155" width="10" height="11"/><rect x="1008" y="165" width="10" height="8"/></g>
<rect x="1029" y="156" width="14" height="15" fill="#e4e0ec" stroke="#444"/><rect x="1032" y="160" width="8" height="8" fill="#c8a090"/>
<use href="#d" x="1054" y="164"/>
<path d="M1066,168 1073,157 1081,164 1074,172Z" fill="#8a9a8a" stroke="#555"/><use href="#d" x="1090.5" y="164"/>
<path d="M1103,159 1110,155 1117,159V169L1110,173 1103,169Z" fill="#7f9fd8" stroke="#5a7ab0"/><path d="M1103,159 1110,163 1117,159 1110,155Z" fill="#c6d8f0"/><use href="#d" x="1128" y="164"/>
<path d="M1138,160 1141,168 1144,160" fill="#a03030"/><path d="M1146,156 1154,164 1146,172 1142,164Z" fill="#b8c8e0" stroke="#889"/><use href="#d" x="1164.5" y="164"/>

<!-- panel -->
<rect x="412.5" y="190.5" width="11" height="11" fill="none" stroke="#222" stroke-width="1.2"/><path d="M412,191H424" stroke="#222" stroke-width="2"/>
<path d="M2,300 8,295 14,301 9,307 2,306Z" fill="#3f6cc4"/><circle cx="3" cy="297" r="4" fill="#d84a4a" opacity=".85"/><path d="M5,302h6" stroke="#cfe0f8"/>
<path d="M151,301 155,306 162,296 155,301Z" fill="#3aa84a" stroke="#3aa84a" stroke-width="1.5"/>
<path d="M449,182 459,180V192L452,197 447,193Z" fill="#1f56b0"/><path d="M451,186 456,184V191L451,193Z" fill="#dfe9f8"/>
<path d="M508,188 516,196M516,188 508,196" stroke="#fff" stroke-width="2"/>

<!-- tray -->
<path d="M1631,1069 1637,1063 1643,1069" fill="none" stroke="#fff" stroke-width="1.4"/>
<rect x="1658" y="1058" width="5" height="11" rx="2.5" fill="#fff"/><path d="M1656,1066C1656,1075 1665,1075 1665,1066M1660.5,1072V1074M1657,1074.5H1664" fill="none" stroke="#fff"/>
</svg>

<!-- ===== TEXT ===== -->
<div class="t" style="left:236px;top:5px">切换窗口</div>
<div class="t" style="left:307px;top:5px">窗口</div>
<div class="t c" style="left:1013px;top:5px;font-size:13px;color:#333">NX 12 - 建模</div>
<div class="t" style="left:1671px;top:8px;font-size:13px;font-weight:bold;color:#2b9a9c;letter-spacing:.4px">SIEMENS</div>

<div class="t c m" style="left:12px;color:#1f8a94">主页</div>
<div class="t c m" style="left:65px">装配</div><div class="t c m" style="left:117px">曲线</div><div class="t c m" style="left:169px">曲面</div><div class="t c m" style="left:221px">分析</div><div class="t c m" style="left:273px">视图</div><div class="t c m" style="left:325px">渲染</div><div class="t c m" style="left:377px">工具</div><div class="t c m" style="left:442px">应用模块</div><div class="t c m" style="left:526px">注塑模向导</div><div class="t c m" style="left:617px">级进模向导</div><div class="t c m" style="left:722px">燕秀PM编程8.2</div>
<div class="t" style="left:1614px;top:33px;color:#aaa">查找命令</div>

<div class="t c l" style="left:116px">基准平面</div><div class="t c l" style="left:161px">拉伸</div><div class="t c l" style="left:202px">孔</div>
<div class="t r1" style="left:250px">阵列特征</div><div class="t r2" style="left:250px">合并</div><div class="t r3" style="left:250px">抽壳</div>
<div class="t c l" style="left:318px">边倒圆</div>
<div class="t r1" style="left:364px">倒斜角</div><div class="t r2" style="left:364px">修剪体</div><div class="t r3" style="left:364px">拔模</div>
<div class="t c l" style="left:427px">更多</div>
<div class="t c l" style="left:479px">移动面</div>
<div class="t r1" style="left:525px">偏置区域</div><div class="t r2" style="left:525px">替换面</div><div class="t r3" style="left:525px">删除面</div>
<div class="t c l" style="left:599px">更多</div>
<div class="t c l" style="left:1325px;color:#333">曲面</div>
<div class="t c l" style="left:1381px;color:#c4c4c4">处理装配</div>
<div class="t c l" style="left:1427px">添加</div>
<div class="t r1" style="left:1473px">装配约束</div><div class="t r2" style="left:1473px">移动组件</div><div class="t r3" style="left:1473px">阵列组件</div>
<div class="t c l" style="left:1556px">测量</div>

<div class="t g" style="left:-5px">图</div>
<div class="t c g" style="left:257px">特征</div><div class="t c g" style="left:528px">同步建模</div>
<div class="t g" style="left:625px">标准化工具 - G...</div><div class="t g" style="left:729px">齿轮...</div><div class="t g" style="left:783px">弹簧...</div><div class="t g" style="left:838px">加工...</div><div class="t g" style="left:893px">建模工具 - G...</div><div class="t g" style="left:987px">?..</div>
<div class="t c g" style="left:1151px">尺寸快速格式化工具 - GC工具箱</div>
<div class="t c g" style="left:1428px">装配</div><div class="t c g" style="left:1546px">分析</div>

<div class="t" style="left:6px;top:157px">无选择过滤器</div>
<div class="t" style="left:148px;top:157px">整个装配</div>

<div class="t" style="left:-5px;top:188px">器</div>
<div class="t" style="left:150px;top:213px">最新</div><div class="t" style="left:250px;top:213px">附注</div>
<div class="t" style="left:-2px;top:233px">型视图</div>
<div class="t" style="left:0;top:253px">摄像机</div>
<div class="t" style="left:-1px;top:273px">型历史记录</div>
<div class="t" style="left:17px;top:294px;font-weight:bold">体 (0)</div>

<div class="t" style="left:467px;top:183px;font-size:12px;color:#fff">ZP.prt</div>
<div class="t c" style="left:873px;top:1031px;font-weight:bold;font-size:11px;color:#222">双击 WCS 激活动态 WCS</div>
<div class="t" style="left:0;top:1058px;font-size:12.5px;color:#fff">2 - 建模</div>
<div class="t" style="left:1678px;top:1058px;font-size:12px;color:#fff">ENG</div>
<div class="t" style="left:1716px;top:1058px;font-size:12px;color:#fff">20</div>
</div></body></html>
